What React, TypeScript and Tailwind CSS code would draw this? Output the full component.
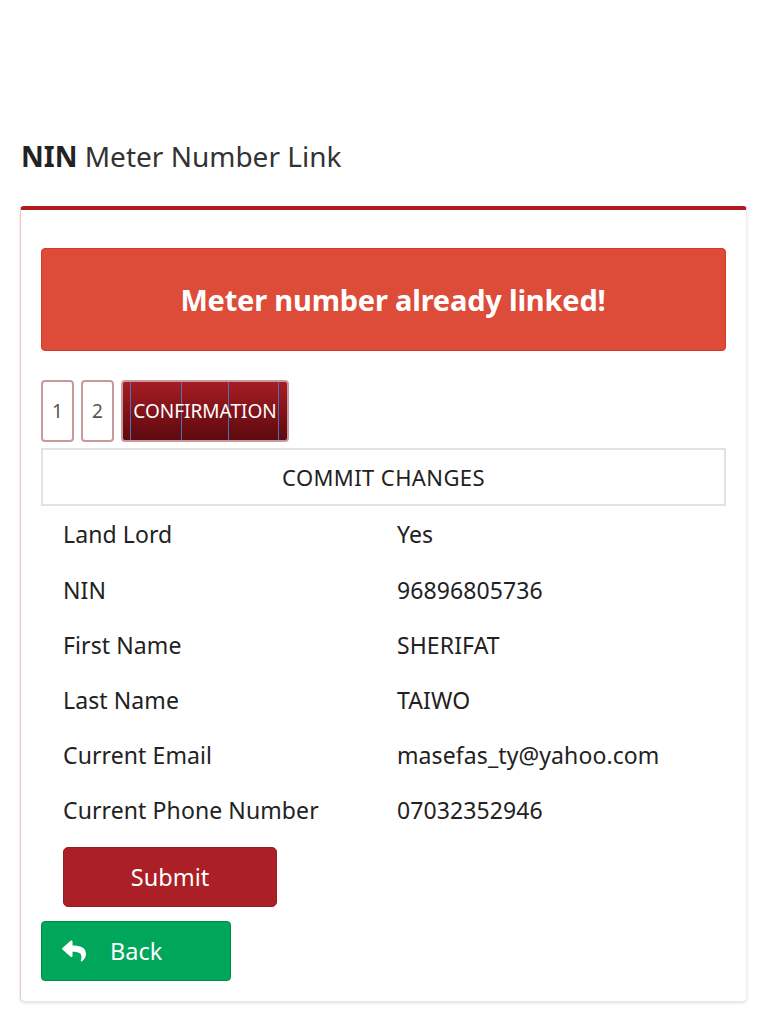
import React from "react";

const rows: [string, string][] = [
  ["Land Lord", "Yes"],
  ["NIN", "96896805736"],
  ["First Name", "SHERIFAT"],
  ["Last Name", "TAIWO"],
  ["Current Email", "masefas_ty@yahoo.com"],
  ["Current Phone Number", "07032352946"],
];

const App: React.FC = () => {
  return (
    <div className="min-h-[1024px] bg-white font-['Noto_Sans',sans-serif] text-[#222]">
      {/* Page title */}
      <div className="px-[21px] pt-[138px] pb-[32px]">
        <h1 className="text-[28px] leading-[36px] text-[#333]">
          <span className="font-bold text-[#222]">NIN</span> Meter Number Link
        </h1>
      </div>

      {/* Card */}
      <div className="mx-[20px] w-[727px] rounded-[4px] border-t-[4px] border-l border-r border-t-[#b31b23] border-l-[#f0c4c4] border-r-[#eeeeee] bg-white px-[20px] pt-[38px] pb-[20px] shadow-[0_2px_3px_rgba(0,0,0,0.12)]">
        {/* Alert */}
        <div className="flex h-[103px] items-center justify-center rounded-[4px] border border-[#d73925] bg-[#dd4b39] pl-[19px]">
          <span className="text-[29px] font-bold tracking-[-0.2px] text-white">
            Meter number already linked!
          </span>
        </div>

        {/* Steps */}
        <div className="mt-[29px] flex gap-[7px]">
          <div className="flex h-[62px] w-[33px] items-center justify-center rounded-[4px] border-2 border-[#c99a9c] text-[19px] text-[#555]">
            1
          </div>
          <div className="flex h-[62px] w-[33px] items-center justify-center rounded-[4px] border-2 border-[#c99a9c] text-[19px] text-[#555]">
            2
          </div>
          <div className="relative flex h-[62px] w-[168px] items-center justify-center overflow-hidden rounded-[4px] border-2 border-[#c99a9c] bg-gradient-to-b from-[#a71c24] to-[#5c0a0e] text-[19px] text-white">
            <span className="absolute top-0 bottom-0 left-[7px] w-px bg-[#4f6fb8]" />
            <span className="absolute top-0 bottom-0 left-[58px] w-px bg-[#4f6fb8]" />
            <span className="absolute top-0 bottom-0 left-[105px] w-px bg-[#4f6fb8]" />
            <span className="absolute top-0 bottom-0 left-[155px] w-px bg-[#4f6fb8]" />
            <span className="relative">CONFIRMATION</span>
          </div>
        </div>

        {/* Commit header */}
        <div className="mt-[6px] flex h-[58px] items-center justify-center border-2 border-[#e2e2e2] text-[22px] tracking-[0.4px] text-[#222]">
          COMMIT CHANGES
        </div>

        {/* Data rows */}
        <div className="mt-[1px] px-[22px]">
          {rows.map(([label, value]) => (
            <div key={label} className="flex h-[55.2px] items-center text-[23px] tracking-[0.1px]">
              <div className="w-[334px]">{label}</div>
              <div>{value}</div>
            </div>
          ))}
        </div>

        {/* Submit */}
        <div className="mt-[9px] px-[22px]">
          <button className="h-[60px] w-[214px] rounded-[5px] border border-[#9a1a1f] bg-[#ab1f26] text-[23.5px] text-white">
            Submit
          </button>
        </div>

        {/* Back */}
        <button className="mt-[14px] flex h-[60px] w-[190px] items-center rounded-[4px] border border-[#008d4c] bg-[#00a65a] pl-[18px] text-[23.5px] text-white">
          <svg viewBox="0 0 512 512" className="h-[24px] w-[28px]" fill="currentColor">
            <path d="M8.309 189.836L184.313 37.851C199.719 24.546 224 35.347 224 56.015v80.053c160.629 1.839 288 34.032 288 186.258 0 61.441-39.581 122.309-83.333 154.132-13.653 9.931-33.111-2.533-28.077-18.631 45.344-145.012-21.507-183.51-176.59-185.742V360c0 20.7-24.3 31.453-39.687 18.164l-176.004-152c-11.071-9.562-11.086-26.753 0-36.328z" />
          </svg>
          <span className="ml-[22px]">Back</span>
        </button>
      </div>
    </div>
  );
};

export default App;
